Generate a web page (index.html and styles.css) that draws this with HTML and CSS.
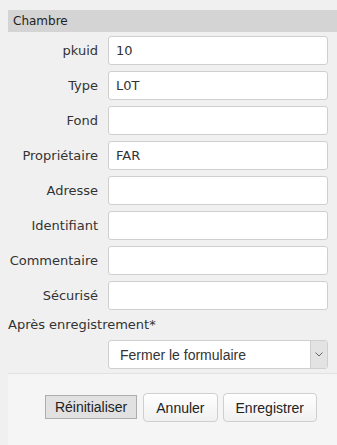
FILE: index.html
```html
<!DOCTYPE html>
<html lang="fr">
<head>
    <meta charset="UTF-8">
    <meta name="viewport" content="width=device-width, initial-scale=1.0">
    <title>Chambre</title>
    <link rel="stylesheet" href="styles.css">
</head>
<body>
    <div class="page">
        <div class="panelTitle">Chambre</div>
        <form class="form">
            <div class="row">
                <label for="pkuid">pkuid</label>
                <input type="text" id="pkuid" value="10">
            </div>
            <div class="row">
                <label for="type">Type</label>
                <input type="text" id="type" value="L0T">
            </div>
            <div class="row">
                <label for="fond">Fond</label>
                <input type="text" id="fond">
            </div>
            <div class="row">
                <label for="proprietaire">Propriétaire</label>
                <input type="text" id="proprietaire" value="FAR">
            </div>
            <div class="row">
                <label for="adresse">Adresse</label>
                <input type="text" id="adresse">
            </div>
            <div class="row">
                <label for="identifiant">Identifiant</label>
                <input type="text" id="identifiant">
            </div>
            <div class="row">
                <label for="commentaire">Commentaire</label>
                <input type="text" id="commentaire">
            </div>
            <div class="row">
                <label for="securise">Sécurisé</label>
                <input type="text" id="securise">
            </div>

            <div class="afterSave">Après enregistrement*</div>
            <div class="selectRow">
                <div class="selectBox">
                    <select id="afterSave">
                        <option>Fermer le formulaire</option>
                        <option>Nouvel enregistrement</option>
                    </select>
                    <span class="selectArrow">
                        <svg width="8" height="5" viewBox="0 0 8 5"><path d="M0.5 0.5 L4 4 L7.5 0.5" fill="none" stroke="#666" stroke-width="1"/></svg>
                    </span>
                </div>
            </div>
        </form>
        <div class="footer">
            <button type="button" class="resetButton">Réinitialiser</button>
            <button type="button" class="button">Annuler</button>
            <button type="button" class="button">Enregistrer</button>
        </div>
    </div>
</body>
</html>
```

FILE: styles.css
```css
html, body {
    margin: 0;
    padding: 0;
    height: 100%;
}
body {
    background: #f0f0f0;
    font-family: 'DejaVu Sans', sans-serif;
    font-size: 13px;
    color: #333;
}
.page {
    padding: 10px 0 0 8px;
    min-height: 100%;
    box-sizing: border-box;
    display: flex;
    flex-direction: column;
}
.panelTitle {
    background: #d4d4d4;
    height: 22px;
    line-height: 22px;
    padding-left: 5px;
    font-size: 12px;
    color: #222;
}
.form {
    margin: 4px 0 0;
}
.row {
    display: grid;
    grid-template-columns: 90px 220px;
    column-gap: 10px;
    align-items: center;
    margin-bottom: 6px;
}
.row label {
    text-align: right;
    white-space: nowrap;
    color: #333;
}
.row input {
    height: 29px;
    box-sizing: border-box;
    border: 1px solid #cfcfcf;
    border-radius: 3px;
    background: #fff;
    padding: 0 7px;
    font-family: 'DejaVu Sans', sans-serif;
    font-size: 13px;
    color: #333;
    outline: none;
}
.afterSave {
    margin-top: 5px;
    line-height: 18px;
}
.selectRow {
    display: flex;
    padding-left: 100px;
    margin-top: 6px;
}
.selectBox {
    display: flex;
    width: 220px;
    height: 29px;
    box-sizing: border-box;
    border: 1px solid #cfcfcf;
    border-radius: 3px;
    background: #fff;
    overflow: hidden;
}
.selectBox select {
    flex: 1;
    appearance: none;
    -webkit-appearance: none;
    border: none;
    background: transparent;
    padding: 0 11px;
    font-family: 'Liberation Sans', Arial, sans-serif;
    font-size: 14px;
    color: #333;
    outline: none;
}
.selectArrow {
    width: 16px;
    background: #e3e3e3;
    border-left: 1px solid #cfcfcf;
    display: flex;
    align-items: center;
    justify-content: center;
}
.footer {
    flex: 1;
    margin-top: 4px;
    border-top: 1px solid #e2e2e2;
    background: #f5f5f5;
    display: flex;
    justify-content: flex-end;
    align-items: flex-start;
    padding: 19px 20px 0 0;
    box-sizing: border-box;
    gap: 5px;
}
.footer button {
    font-family: 'Liberation Sans', Arial, sans-serif;
    font-size: 14px;
    color: #222;
    cursor: pointer;
}
.resetButton {
    margin-top: 2px;
    height: 24px;
    padding: 0 9px;
    background: #e1e1e1;
    border: 1px solid #adadad;
    border-radius: 0;
    margin-right: 1px;
}
.button {
    height: 29px;
    padding: 0 12px;
    background: linear-gradient(#ffffff, #f0f0f0);
    border: 1px solid #cfcfcf;
    border-radius: 4px;
}
.button:hover {
    background: #e6e6e6;
}
```
